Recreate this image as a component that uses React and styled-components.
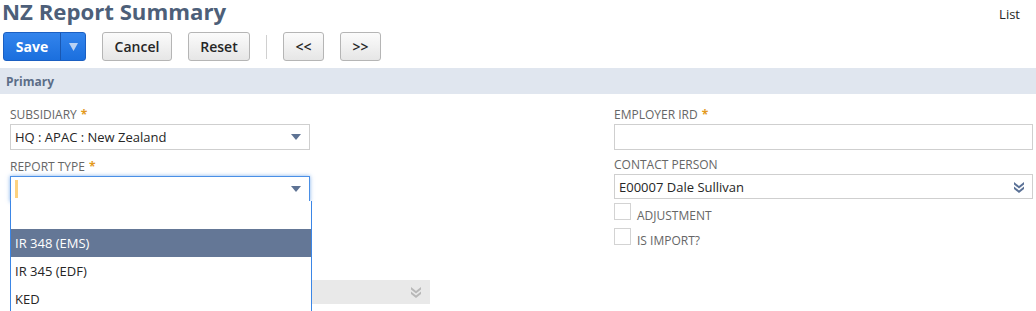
import React from "react";
import styled, { createGlobalStyle } from "styled-components";

const Global = createGlobalStyle`
  html, body { margin: 0; padding: 0; background: #fff; }
  body { font-family: "Open Sans", "Liberation Sans", sans-serif; color: #262626; }
  * { box-sizing: border-box; }
`;

const Page = styled.div`
  width: 1036px;
  height: 311px;
  overflow: hidden;
  position: relative;
`;

const TitleRow = styled.div`
  display: flex;
  justify-content: space-between;
  align-items: flex-start;
  height: 32px;
  padding: 0 16px 0 2px;
`;

const Title = styled.h1`
  margin: 0;
  font-size: 22.2px;
  line-height: 24px;
  font-weight: 700;
  color: #4d5f79;
`;

const ListLink = styled.span`
  font-size: 13px;
  line-height: 18px;
  margin-top: 5px;
  color: #262626;
`;

const Toolbar = styled.div`
  display: flex;
  align-items: center;
  gap: 16px;
  padding-left: 3px;
  height: 29px;
`;

const SaveGroup = styled.div`
  display: flex;
  height: 29px;
  border: 1px solid #1b5fc2;
  border-radius: 3px;
  background: linear-gradient(#3384ec, #1b6fde);
  overflow: hidden;
`;

const SaveMain = styled.button`
  width: 56px;
  border: 0;
  background: transparent;
  color: #fff;
  font-family: inherit;
  font-weight: 700;
  font-size: 14px;
  padding: 0;
`;

const SaveArrow = styled.span`
  width: 25px;
  border-left: 1px solid #1a57b0;
  display: flex;
  align-items: center;
  justify-content: center;
`;

const Button = styled.button`
  height: 29px;
  width: ${(p) => p.$w}px;
  border: 1px solid #b5b5b5;
  border-radius: 3px;
  background: linear-gradient(#fbfbfb, #e6e6e6);
  font-family: inherit;
  font-weight: 600;
  font-size: 14px;
  color: #262626;
  padding: 0;
`;

const Sep = styled.span`
  width: 1px;
  height: 24px;
  background: #d0d0d0;
`;

const Band = styled.div`
  margin-top: 7px;
  height: 26px;
  background: #e0e6ef;
  display: flex;
  align-items: center;
  padding-left: 6px;
  font-size: 12px;
  font-weight: 700;
  color: #5b6d87;
`;

const Form = styled.div`
  display: grid;
  grid-template-columns: 604px 419px;
  padding: 14px 0 0 10px;
`;

const Column = styled.div`
  display: flex;
  flex-direction: column;
  gap: ${(p) => p.$gap ?? 10}px;
`;

const Field = styled.div`
  position: relative;
  width: ${(p) => p.$w || 300}px;
`;

const Label = styled.div`
  font-size: 12px;
  line-height: 14px;
  height: 14px;
  margin-bottom: 2px;
  color: #666;
  text-transform: uppercase;
`;

const Req = styled.span`
  color: #e39a1e;
  font-weight: 700;
  margin-left: 4px;
`;

const Box = styled.div`
  height: ${(p) => p.$h || 26}px;
  border: 1px solid ${(p) => (p.$focus ? "#4a8fe6" : p.$disabled ? "#e9e9e9" : "#cfcfcf")};
  background: ${(p) => (p.$disabled ? "#e9e9e9" : "#fff")};
  box-shadow: ${(p) => (p.$focus ? "0 0 4px rgba(74,143,230,0.7)" : "none")};
  display: flex;
  align-items: center;
  justify-content: space-between;
  padding: 0 7px 0 4px;
  font-size: 13px;
  color: #262626;
`;

const Caret = styled.span`
  width: 3px;
  height: 18px;
  background: #fdd27f;
`;

const Tri = styled.span`
  width: 0;
  height: 0;
  border-left: 5.5px solid transparent;
  border-right: 5.5px solid transparent;
  border-top: 6px solid #5e7394;
  margin-right: 1px;
`;

const Menu = styled.ul`
  position: absolute;
  left: 0;
  top: 41px;
  width: 302px;
  margin: 0;
  padding: 0;
  list-style: none;
  background: #fff;
  border: 1px solid #3b86e6;
  border-top: 0;
  z-index: 5;
`;

const Option = styled.li`
  height: 28px;
  line-height: 28px;
  padding-left: 4px;
  font-size: 13px;
  color: ${(p) => (p.$sel ? "#fff" : "#262626")};
  background: ${(p) => (p.$sel ? "#647796" : "#fff")};
`;

const Checks = styled.div`
  display: flex;
  flex-direction: column;
  gap: 8px;
  margin-top: -4px;
`;

const CheckRow = styled.label`
  display: flex;
  align-items: flex-end;
  gap: 6px;
  height: 17px;
  font-size: 12px;
  color: #666;
`;

const Check = styled.span`
  width: 17px;
  height: 17px;
  border: 1px solid #d3d3d3;
  background: #fff;
`;

const CheckText = styled.span`
  line-height: 12px;
  margin-bottom: -2px;
  text-transform: uppercase;
`;

const Double = ({ color }) => (
  <svg width="12" height="12" viewBox="0 0 12 12">
    <path d="M1 1 L6 5 L11 1 L11 3.5 L6 7.5 L1 3.5 Z" fill={color} />
    <path d="M1 5.5 L6 9.5 L11 5.5 L11 8 L6 12 L1 8 Z" fill={color} />
  </svg>
);

export default function App() {
  return (
    <Page>
      <Global />
      <TitleRow>
        <Title>NZ Report Summary</Title>
        <ListLink>List</ListLink>
      </TitleRow>
      <Toolbar>
        <SaveGroup>
          <SaveMain>Save</SaveMain>
          <SaveArrow>
            <svg width="9" height="8" viewBox="0 0 9 8">
              <path d="M0 0 H9 L4.5 8 Z" fill="#b9d2f3" />
            </svg>
          </SaveArrow>
        </SaveGroup>
        <Button $w={70}>Cancel</Button>
        <Button $w={62}>Reset</Button>
        <Sep />
        <Button $w={41}>&lt;&lt;</Button>
        <Button $w={41}>&gt;&gt;</Button>
      </Toolbar>
      <Band>Primary</Band>
      <Form>
        <Column>
          <Field>
            <Label>Subsidiary<Req>*</Req></Label>
            <Box>
              <span>HQ : APAC : New Zealand</span>
              <Tri />
            </Box>
          </Field>
          <Field>
            <Label>Report Type<Req>*</Req></Label>
            <Box $focus>
              <Caret />
              <Tri />
            </Box>
            <Menu>
              <Option />
              <Option $sel>IR 348 (EMS)</Option>
              <Option>IR 345 (EDF)</Option>
              <Option>KED</Option>
            </Menu>
          </Field>
          <Field>
            <Label />
            <Box />
          </Field>
          <Field $w={420}>
            <Label />
            <Box $disabled $h={24}>
              <span />
              <Double color="#b8b8b8" />
            </Box>
          </Field>
        </Column>
        <Column $gap={8}>
          <Field $w={419}>
            <Label>Employer IRD<Req>*</Req></Label>
            <Box />
          </Field>
          <Field $w={419}>
            <Label>Contact Person</Label>
            <Box $h={25}>
              <span>E00007 Dale Sullivan</span>
              <Double color="#5a7196" />
            </Box>
          </Field>
          <Checks>
            <CheckRow>
              <Check />
              <CheckText>Adjustment</CheckText>
            </CheckRow>
            <CheckRow>
              <Check />
              <CheckText>Is Import?</CheckText>
            </CheckRow>
          </Checks>
        </Column>
      </Form>
    </Page>
  );
}
